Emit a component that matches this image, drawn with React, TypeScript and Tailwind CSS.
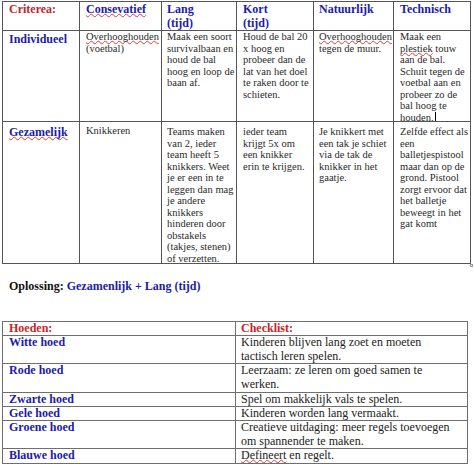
import React from "react";

const blue = "text-[#1c1caa]";
const red = "text-[#cc1f2a]";

function Wavy({ children }: { children: React.ReactNode }) {
  return (
    <span className="underline decoration-wavy decoration-[#e03a3a] decoration-[0.5px] underline-offset-[0px] [text-decoration-skip-ink:none]">
      {children}
    </span>
  );
}

function Lines({ lines }: { lines: React.ReactNode[] }) {
  return (
    <>
      {lines.map((l, i) => (
        <span key={i} className="block whitespace-nowrap">
          {l}
        </span>
      ))}
    </>
  );
}

const topCell = "border-r border-b border-[#555555] overflow-hidden";
const bodyText = "text-[10.5px] leading-[11.5px] text-[#2a2a2a]";
const headText = "text-[12px] leading-[14px] font-bold";

export default function App() {
  return (
    <div className="relative w-[474px] h-[467px] bg-white overflow-hidden font-['Liberation_Serif',serif]">
      {/* Top table */}
      <div className="ml-[2px] mt-[1px] w-[469px] grid grid-cols-[77px_82px_75px_77px_80px_77px] grid-rows-[29px_91px_142px] border-l border-t border-[#555555]">
        {/* header */}
        <div className={`${topCell} pl-[6px] ${headText} ${red}`}>Criterea:</div>
        <div className={`${topCell} pl-[6px] ${headText} ${blue}`}>
          <Wavy>Consevatief</Wavy>
        </div>
        <div className={`${topCell} pl-[5px] ${headText} ${blue}`}>
          <Lines lines={["Lang", "(tijd)"]} />
        </div>
        <div className={`${topCell} pl-[6px] ${headText} ${blue}`}>
          <Lines lines={["Kort", "(tijd)"]} />
        </div>
        <div className={`${topCell} pl-[5px] ${headText} ${blue}`}>Natuurlijk</div>
        <div className={`${topCell} pl-[6px] ${headText} ${blue}`}>Technisch</div>

        {/* row 2 */}
        <div className={`${topCell} pl-[6px] pt-[1px] ${headText} ${blue}`}>Individueel</div>
        <div className={`${topCell} pl-[6px] ${bodyText}`}>
          <Lines lines={[<Wavy key="o">Overhooghouden</Wavy>, "(voetbal)"]} />
        </div>
        <div className={`${topCell} pl-[5px] ${bodyText}`}>
          <Lines lines={["Maak een soort", "survivalbaan en", "houd de bal", "hoog en loop de", "baan af."]} />
        </div>
        <div className={`${topCell} pl-[6px] ${bodyText}`}>
          <Lines
            lines={["Houd de bal 20", "x hoog en", "probeer dan de", "lat van het doel", "te raken door te", "schieten."]}
          />
        </div>
        <div className={`${topCell} pl-[5px] ${bodyText}`}>
          <Lines lines={[<Wavy key="o">Overhooghouden</Wavy>, "tegen de muur."]} />
        </div>
        <div className={`${topCell} pl-[6px] ${bodyText}`}>
          <Lines
            lines={[
              "Maak een",
              <span key="p">
                <Wavy>plestiek</Wavy> touw
              </span>,
              "aan de bal.",
              "Schuit tegen de",
              "voetbal aan en",
              "probeer zo de",
              "bal hoog te",
              <span key="h" className="inline-flex items-center">
                houden.
                <span className="inline-block w-px h-[11px] bg-black ml-[1px]" />
              </span>,
            ]}
          />
        </div>

        {/* row 3 */}
        <div className={`${topCell} pl-[6px] pt-[3px] ${headText} ${blue}`}>
          <Wavy>Gezamelijk</Wavy>
        </div>
        <div className={`${topCell} pl-[6px] pt-[3px] ${bodyText}`}>Knikkeren</div>
        <div className={`${topCell} pl-[5px] pt-[4px] ${bodyText}`}>
          <Lines
            lines={[
              "Teams maken",
              "van 2, ieder",
              "team heeft 5",
              "knikkers. Weet",
              "je er een in te",
              "leggen dan mag",
              "je andere",
              "knikkers",
              "hinderen door",
              "obstakels",
              "(takjes, stenen)",
              "of verzetten.",
            ]}
          />
        </div>
        <div className={`${topCell} pl-[6px] pt-[4px] ${bodyText}`}>
          <Lines lines={["ieder team", "krijgt 5x om", "een knikker", "erin te krijgen."]} />
        </div>
        <div className={`${topCell} pl-[5px] pt-[4px] ${bodyText}`}>
          <Lines lines={["Je knikkert met", "een tak je schiet", "via de tak de", "knikker in het", "gaatje."]} />
        </div>
        <div className={`${topCell} pl-[6px] pt-[4px] ${bodyText}`}>
          <Lines
            lines={[
              "Zelfde effect als",
              "een",
              "balletjespistool",
              "maar dan op de",
              "grond. Pistool",
              "zorgt ervoor dat",
              "het balletje",
              "beweegt in het",
              "gat komt",
            ]}
          />
        </div>
      </div>

      {/* table resize handle */}
      <div className="absolute left-[470px] top-[264px] w-[3px] h-[3px] border border-[#999999]" />

      {/* Oplossing */}
      <div className="ml-[9px] mt-[15px] text-[12px] leading-[14px] font-bold text-[#111111]">
        Oplossing: <span className={blue}>Gezamenlijk + Lang (tijd)</span>
      </div>

      {/* Bottom table */}
      <div className="ml-[2px] mt-[28px] w-[466px] grid grid-cols-[233px_232px] grid-rows-[14px_28px_29px_14px_14px_28px_15px] border-l border-t border-[#6e6e6e] text-[12px] leading-[13.5px]">
        {[
          { h: "Hoeden:", c: ["Checklist:"], head: true },
          { h: "Witte hoed", c: ["Kinderen blijven lang zoet en moeten", "tactisch leren spelen."] },
          { h: "Rode hoed", c: ["Leerzaam: ze leren om goed samen te", "werken."] },
          { h: "Zwarte hoed", c: ["Spel om makkelijk vals te spelen."] },
          { h: "Gele hoed", c: ["Kinderen worden lang vermaakt."] },
          { h: "Groene hoed", c: ["Creatieve uitdaging: meer regels toevoegen", "om spannender te maken."] },
          { h: "Blauwe hoed", c: [<span key="d"><Wavy>Defineert</Wavy> en regelt.</span>] },
        ].map((r, i) => (
          <React.Fragment key={i}>
            <div
              className={`border-r border-b border-[#6e6e6e] pl-[6px] font-bold overflow-hidden ${
                r.head ? red : blue
              }`}
            >
              {r.h}
            </div>
            <div
              className={`border-r border-b border-[#6e6e6e] pl-[5px] overflow-hidden ${
                r.head ? `font-bold ${red}` : "text-[#222222]"
              }`}
            >
              <Lines lines={r.c} />
            </div>
          </React.Fragment>
        ))}
      </div>
    </div>
  );
}
